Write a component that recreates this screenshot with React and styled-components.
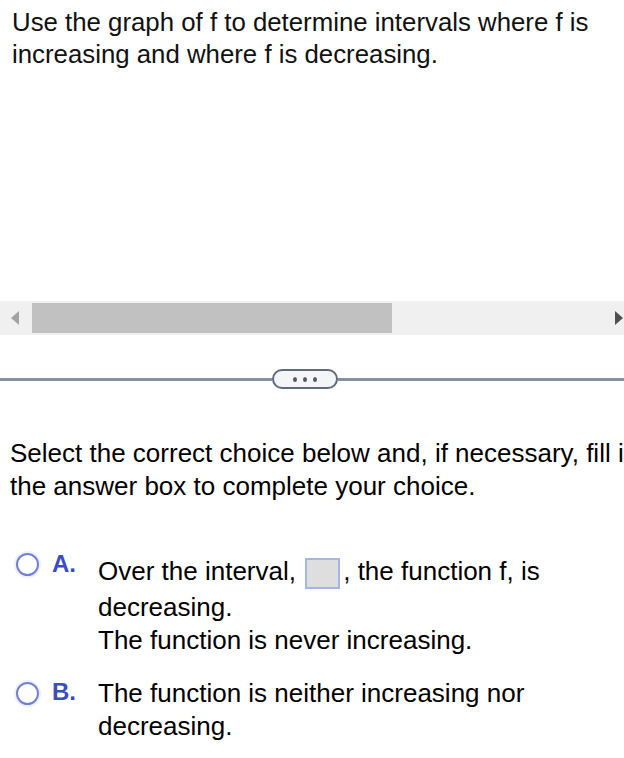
import React from "react";
import styled, {createGlobalStyle} from "styled-components";

const GlobalStyle = createGlobalStyle`
  html, body {
    margin: 0;
    padding: 0;
    background: #ffffff;
  }
  body {
    font-family: "Liberation Sans", Arial, sans-serif;
    color: #000000;
  }
`

const Page = styled.div`
  width: 624px;
  height: 758px;
  overflow: hidden;
  background: #ffffff;
`

const Title = styled.div`
  padding: 6px 12px 0 12px;
  font-size: 25.8px;
  line-height: 32px;
  color: #111111;
  width: 600px;
`

const GraphArea = styled.div`
  height: 231px;
`

const ScrollBar = styled.div`
  display: flex;
  align-items: center;
  height: 34px;
  background: #f0f0f0;
  padding: 0 1px 0 0;
`

const Arrow = styled.div`
  width: 0;
  height: 0;
  border-top: 7px solid transparent;
  border-bottom: 7px solid transparent;
  ${p => p.$dir === "left"
    ? `border-right: 8px solid #a3a3a3; margin: 0 13px 0 11px;`
    : `border-left: 8px solid #505050; margin-left: auto;`}
`

const Thumb = styled.div`
  width: 360px;
  height: 30px;
  background: #c1c1c1;
`

const Divider = styled.div`
  display: flex;
  align-items: center;
  margin-top: 34px;
  height: 20px;
`

const Line = styled.div`
  height: 3px;
  background: #8891a1;
  flex: ${p => p.$grow ? "1 1 auto" : "0 0 272px"};
`

const Pill = styled.div`
  box-sizing: border-box;
  width: 66px;
  height: 20px;
  border: 2px solid #5f6b7c;
  border-radius: 10px;
  background: #f4f5f7;
  display: flex;
  align-items: center;
  justify-content: center;
  gap: 6px;
`

const Dot = styled.span`
  width: 4px;
  height: 5px;
  border-radius: 50%;
  background: #4f5a6c;
`

const Prompt = styled.div`
  width: 660px;
  margin-top: 48px;
  padding-left: 10px;
  font-size: 26px;
  line-height: 33px;
`

const Options = styled.div`
  margin-top: 48px;
  display: flex;
  flex-direction: column;
  gap: 20px;
`

const Option = styled.div`
  display: flex;
  align-items: flex-start;
  width: 680px;
`

const Radio = styled.span`
  box-sizing: border-box;
  flex: 0 0 auto;
  width: 23px;
  height: 23px;
  margin: ${p => p.$top}px 0 0 16px;
  border: 2px solid #6f7fd8;
  border-radius: 50%;
  box-shadow: 0 0 0 2px rgba(120, 135, 220, 0.12);
`

const Letter = styled.span`
  flex: 0 0 46px;
  margin: ${p => p.$top}px 0 0 13px;
  font-size: 24px;
  font-weight: bold;
  line-height: 24px;
  color: #3b4dc2;
`

const OptionText = styled.div`
  width: 550px;
  font-size: 26px;
  line-height: 33px;
`

const AnswerBox = styled.span`
  display: inline-block;
  box-sizing: border-box;
  width: 35px;
  height: 31px;
  margin: 0 3px 0 2px;
  vertical-align: middle;
  border: 2px solid #a4b6e8;
  background: #dedede;
`

const FirstLine = styled.div`
  line-height: 40px;
`

function App() {
    return (
        <Page>
            <GlobalStyle/>
            <Title>
                Use the graph of f to determine intervals where f is increasing and where f is decreasing.
            </Title>
            <GraphArea/>
            <ScrollBar>
                <Arrow $dir="left"/>
                <Thumb/>
                <Arrow $dir="right"/>
            </ScrollBar>
            <Divider>
                <Line/>
                <Pill>
                    <Dot/><Dot/><Dot/>
                </Pill>
                <Line $grow/>
            </Divider>
            <Prompt>
                Select the correct choice below and, if necessary, fill in the answer box to complete your choice.
            </Prompt>
            <Options>
                <Option>
                    <Radio $top={2}/>
                    <Letter $top={1}>A.</Letter>
                    <OptionText>
                        <FirstLine>Over the interval, <AnswerBox/>, the function f, is</FirstLine>
                        decreasing.
                        <br/>
                        The function is never increasing.
                    </OptionText>
                </Option>
                <Option>
                    <Radio $top={5}/>
                    <Letter $top={3}>B.</Letter>
                    <OptionText>
                        The function is neither increasing nor decreasing.
                    </OptionText>
                </Option>
            </Options>
        </Page>
    );
}

export default App;
